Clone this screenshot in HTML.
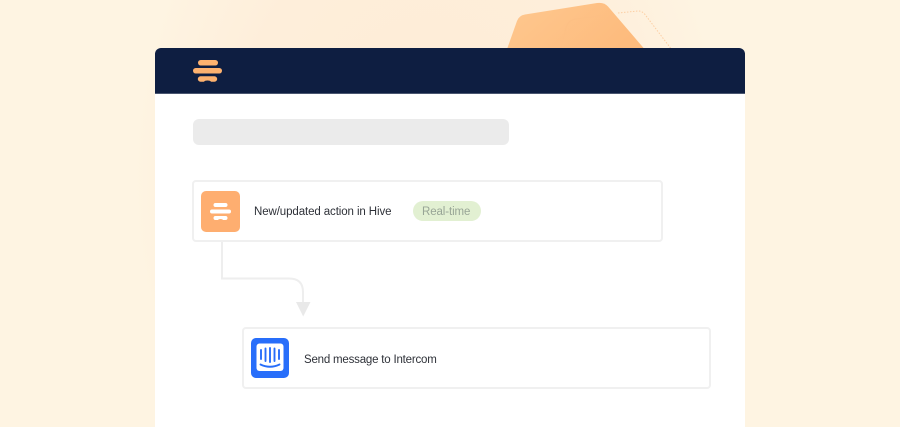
<!DOCTYPE html>
<html><head><meta charset="utf-8"><style>
html,body{margin:0;padding:0}
body{width:900px;height:427px;overflow:hidden;position:relative;background:#fef4e2;font-family:"Liberation Sans",sans-serif}
.abs{position:absolute}
.glow{left:0;top:0;width:900px;height:427px;background:radial-gradient(ellipse 300px 400px at 430px 180px,#feecd6 0%,#feeeda 65%,rgba(254,244,226,0) 100%)}
.card{left:155px;top:48px;width:590px;height:379px;background:#fff;border-radius:6px 6px 0 0;overflow:hidden}
.head{left:0;top:0;width:590px;height:45px;background:#0e1e41;border-bottom:1px solid #4a5670}
.box{background:#fff;border:2px solid #f0f0f0;border-radius:4px;box-sizing:border-box}
.t{font-size:11.5px;line-height:16px;color:#2e3138;white-space:nowrap;letter-spacing:-.1px;filter:blur(.3px)}
</style></head><body>
<div class="abs glow"></div>
<svg class="abs" style="left:0;top:0" width="900" height="60" viewBox="0 0 900 60">
<defs><linearGradient id="g" x1="0" y1="0" x2="1" y2="0.4"><stop offset="0" stop-color="#fec88f"/><stop offset="1" stop-color="#fdbb7d"/></linearGradient></defs>
<path d="M506 52 L517 21 Q519 15.500 525 14.500 L597 3 Q604 2 608 6.500 L647 52 Z" fill="url(#g)"/>
<path d="M560 52 L566 28 Q568 20 576 19 L600 16" fill="none" stroke="#fdbf84" stroke-width="1"/>
<path d="M618 13 L638 11 Q642 10.800 645 14.500 L672 50" fill="none" stroke="#fccfa4" stroke-width="1" stroke-dasharray="1.500 1.500"/>
</svg>
<div class="abs card">
<div class="abs head"></div>
<svg class="abs" style="left:38px;top:11px" width="30" height="24" viewBox="0 0 30 24">
<rect x="5" y="1" width="20" height="5.500" rx="2.700" fill="#fdb26f"/>
<rect x="0" y="9" width="29" height="5.500" rx="2.700" fill="#fdb26f"/>
<path d="M7.500 17.300 H21.500 A2.700 2.700 0 0 1 21.500 22.700 H18 Q17 21.500 14.500 21.500 Q12 21.500 11 22.700 H7.500 A2.700 2.700 0 0 1 7.500 17.300 Z" fill="#fdb26f"/>
</svg>
<div class="abs" style="left:38px;top:71px;width:316px;height:26px;background:#ebebeb;border-radius:6px"></div>
</div>
<div class="abs box" style="left:192px;top:180px;width:471px;height:62px"></div>
<div class="abs" style="left:201px;top:191px;width:39px;height:41px;background:#feae70;border-radius:5px"></div>
<svg class="abs" style="left:210px;top:202px" width="22" height="19" viewBox="0 0 22 19">
<rect x="3.500" y="1" width="14" height="4" rx="2" fill="#fff"/>
<rect x="0" y="7.500" width="21" height="4" rx="2" fill="#fff"/>
<path d="M5.500 14 H15.500 A2 2 0 0 1 15.500 18 H13 Q12.500 17 10.500 17 Q8.500 17 8 18 H5.500 A2 2 0 0 1 5.500 14 Z" fill="#fff"/>
</svg>
<div class="abs t" style="left:254px;top:204px">New/updated action in Hive</div>
<div class="abs" style="left:413px;top:201px;width:68px;height:20px;background:#e2f0d2;border-radius:10px"></div>
<div class="abs t" style="left:422px;top:204px;color:#98a596">Real-time</div>
<svg class="abs" style="left:210px;top:240px" width="110" height="80" viewBox="0 0 110 80">
<path d="M12 2 V38.500 H79 Q93 38.500 93 52 V64" fill="none" stroke="#eeeeee" stroke-width="2"/>
<path d="M86 62 H100.500 L93.200 76.500 Z" fill="#e9e9e9"/>
</svg>
<div class="abs box" style="left:242px;top:327px;width:469px;height:62px"></div>
<div class="abs" style="left:251px;top:338px;width:38px;height:40px;background:#286efa;border-radius:5px"></div>
<svg class="abs" style="left:251px;top:338px" width="38" height="40" viewBox="0 0 38 40">
<rect x="5.500" y="5.500" width="27" height="27.500" rx="3" fill="#fff"/>
<g stroke="#286efa" stroke-width="1.900" stroke-linecap="round" fill="none">
<path d="M10 12 V21"/><path d="M14.500 10.500 V23"/><path d="M19 10 V24"/><path d="M23.500 10.500 V23"/><path d="M28 12 V21"/>
<path d="M9.500 26.500 Q19 31 28.500 26.500"/>
</g>
</svg>
<div class="abs t" style="left:304px;top:352px;letter-spacing:-.2px">Send message to Intercom</div>
</body></html>
